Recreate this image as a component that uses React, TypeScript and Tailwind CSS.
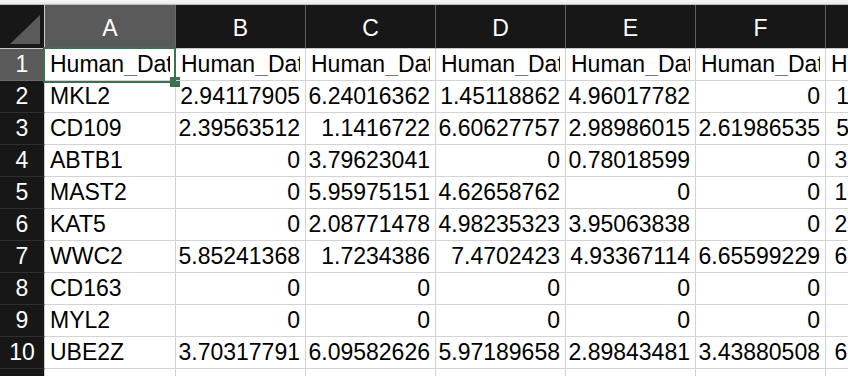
import React from "react";

type Row = { n: number; name: string; vals: (string | number)[] };

const rows: Row[] = [
  { n: 2, name: "MKL2", vals: ["2.94117905", "6.24016362", "1.45118862", "4.96017782", "0", "1.82640117"] },
  { n: 3, name: "CD109", vals: ["2.39563512", "1.1416722", "6.60627757", "2.98986015", "2.61986535", "5.04711283"] },
  { n: 4, name: "ABTB1", vals: ["0", "3.79623041", "0", "0.78018599", "0", "3.15204968"] },
  { n: 5, name: "MAST2", vals: ["0", "5.95975151", "4.62658762", "0", "0", "1.96208413"] },
  { n: 6, name: "KAT5", vals: ["0", "2.08771478", "4.98235323", "3.95063838", "0", "2.71345906"] },
  { n: 7, name: "WWC2", vals: ["5.85241368", "1.7234386", "7.4702423", "4.93367114", "6.65599229", "6.30418752"] },
  { n: 8, name: "CD163", vals: ["0", "0", "0", "0", "0", "0"] },
  { n: 9, name: "MYL2", vals: ["0", "0", "0", "0", "0", "0"] },
  { n: 10, name: "UBE2Z", vals: ["3.70317791", "6.09582626", "5.97189658", "2.89843481", "3.43880508", "6.12907344"] },
];

const letters = ["A", "B", "C", "D", "E", "F", "G"];
const colW = ["w-[131px]", "w-[130px]", "w-[130px]", "w-[130px]", "w-[130px]", "w-[130px]", "w-[136px]"];

const cell =
  "h-[32px] shrink-0 border-r border-b border-[#d3d3d3] px-[5px] flex items-center overflow-hidden whitespace-nowrap";

function RowHead({ n, active }: { n?: number; active?: boolean }) {
  return (
    <div
      className={`w-[45px] h-[32px] shrink-0 flex items-center justify-center border-r border-r-[#c9c9c9] border-b ${
        active ? "bg-[#5a5a5a] border-b-[#6a6a6a]" : "bg-[#171717] border-b-[#2e2e2e]"
      } text-white`}
    >
      {n}
    </div>
  );
}

export default function App() {
  return (
    <div
      className="w-[848px] h-[376px] overflow-hidden bg-white text-[23px] leading-none text-black"
      style={{ fontFamily: '"Liberation Sans", Arial, sans-serif' }}
    >
      {/* toolbar edge above the grid */}
      <div className="h-[5px] bg-[#ebebeb] border-t-[2px] border-t-[#f4f4f4] border-b border-b-[#bdbdbd]" />

      {/* column headers */}
      <div className="flex h-[44px] w-max">
        <div className="w-[45px] h-[44px] shrink-0 bg-[#171717] border-r border-b border-[#c9c9c9] relative">
          <svg className="absolute left-0 top-0" width="44" height="43" viewBox="0 0 44 43">
            <polygon points="10,39 40,39 40,10" fill="#5a5a5a" />
          </svg>
        </div>
        {letters.map((l, i) => (
          <div
            key={l}
            className={`${colW[i]} h-[44px] shrink-0 flex items-center justify-center pt-[3px] text-white border-b border-b-[#c9c9c9] border-r ${
              i === 0 ? "bg-[#5a5a5a] border-r-[#6a6a6a]" : "bg-[#171717] border-r-[#5e5e5e]"
            }`}
          >
            {l}
          </div>
        ))}
      </div>

      {/* row 1: column titles */}
      <div className="flex w-max">
        <RowHead n={1} active />
        {letters.map((l, i) => (
          <div key={l} className={`${colW[i]} ${cell} relative overflow-visible`}>
            <span className="block overflow-hidden w-full">Human_Data_{l}</span>
            {i === 0 && (
              <div className="absolute left-[-2px] top-[-2px] right-[-1px] bottom-[-3px] border-[2.5px] border-[#3a7150] pointer-events-none">
                <div className="absolute right-[-6px] bottom-[-6px] w-[10px] h-[10px] bg-[#3a7150]" />
              </div>
            )}
          </div>
        ))}
      </div>

      {/* data rows */}
      {rows.map((r) => (
        <div key={r.n} className="flex w-max">
          <RowHead n={r.n} />
          <div className={`${colW[0]} ${cell}`}>{r.name}</div>
          {r.vals.map((v, i) => (
            <div key={i} className={`${colW[i + 1]} ${cell} justify-end`}>
              {v}
            </div>
          ))}
        </div>
      ))}

      {/* next row, cut off at the bottom */}
      <div className="flex w-max">
        <RowHead />
        {letters.map((l, i) => (
          <div key={l} className={`${colW[i]} ${cell}`} />
        ))}
      </div>
    </div>
  );
}
